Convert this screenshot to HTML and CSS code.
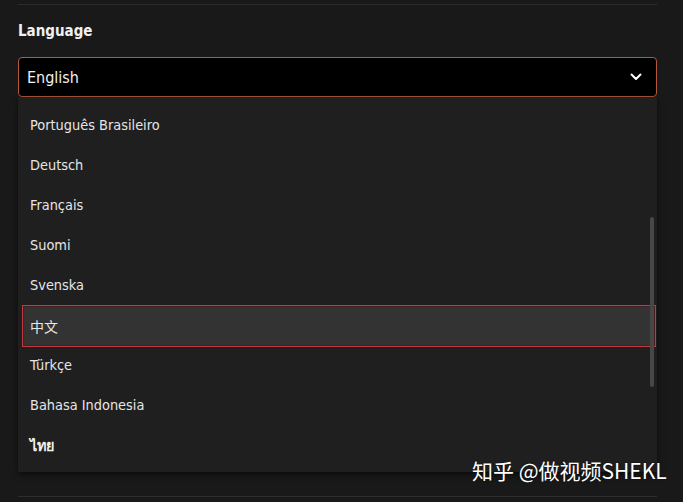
FILE: index.html
```html
<!DOCTYPE html>
<html>
<head>
<meta charset="utf-8">
<link rel="stylesheet" href="styles.css">
</head>
<body>
<div class="panel">
  <div class="sep"></div>
  <div class="label">Language</div>
  <div class="select">
    <span>English</span>
    <svg class="chev" width="12" height="8" viewBox="0 0 12 8"><path d="M1.5 1.5 L6 6 L10.5 1.5" fill="none" stroke="#fff" stroke-width="2" stroke-linecap="round" stroke-linejoin="round"/></svg>
  </div>
  <div class="menu">
    <div class="item">Português Brasileiro</div>
    <div class="item">Deutsch</div>
    <div class="item">Français</div>
    <div class="item">Suomi</div>
    <div class="item">Svenska</div>
    <div class="item active">中文</div>
    <div class="item">Türkçe</div>
    <div class="item">Bahasa Indonesia</div>
    <div class="item thai">ไทย</div>
    <div class="scrollbar"></div>
  </div>
  <div class="sep bottom"></div>
</div>
<div class="watermark">知乎 @做视频SHEKL</div>
</body>
</html>
```

FILE: styles.css
```css
html, body {
  margin: 0;
  padding: 0;
  background: #191919;
  height: 502px;
  overflow: hidden;
}
body {
  font-family: "DejaVu Sans Condensed", "DejaVu Sans", "Noto Sans CJK SC", sans-serif;
  color: #e8e8e8;
  position: relative;
}
.panel {
  padding: 4px 26px 0 18px;
}
.sep {
  border-top: 1px solid #2c2c2c;
}
.label {
  margin-top: 17px;
  font-weight: bold;
  font-size: 15px;
  line-height: 18px;
  color: #f0f0f0;
}
.select {
  margin-top: 17px;
  height: 38px;
  background: #000;
  border: 1px solid #b4593a;
  border-radius: 4px;
  display: flex;
  align-items: center;
  justify-content: space-between;
  padding: 0 14px 0 8px;
  font-size: 16px;
  color: #f2f2f2;
}
.chev {
  display: block;
}
.menu {
  position: relative;
  height: 375px;
  box-sizing: border-box;
  padding: 8px 1px 0 4px;
  background: #1f1f1f;
  box-shadow: 0 2px 6px rgba(0,0,0,0.6);
}
.item {
  height: 40px;
  box-sizing: border-box;
  display: flex;
  align-items: center;
  padding-left: 7px;
  font-size: 14.4px;
  color: #e6e6e6;
  border: 1px solid transparent;
}
.item.active {
  height: 42px;
  margin-bottom: -2px;
  background: #333333;
  border-color: #c23a3f;
  box-shadow: inset 0 0 0 1px #4a1e20;
  font-family: "Noto Sans CJK SC", sans-serif;
  font-size: 14px;
  position: relative;
}
.item.thai {
  font-weight: bold;
  color: #f0f0f0;
}
.scrollbar {
  position: absolute;
  right: 3px;
  top: 120px;
  width: 4px;
  height: 170px;
  border-radius: 2px;
  background: #474747;
}
.sep.bottom {
  margin-top: 24px;
  border-top-color: #2e2e2e;
}
.watermark {
  position: absolute;
  left: 472px;
  top: 455px;
  font-family: "Noto Sans CJK SC", sans-serif;
  font-size: 21px;
  color: #fff;
  text-shadow: 0 0 2px rgba(0,0,0,0.6);
}
```
